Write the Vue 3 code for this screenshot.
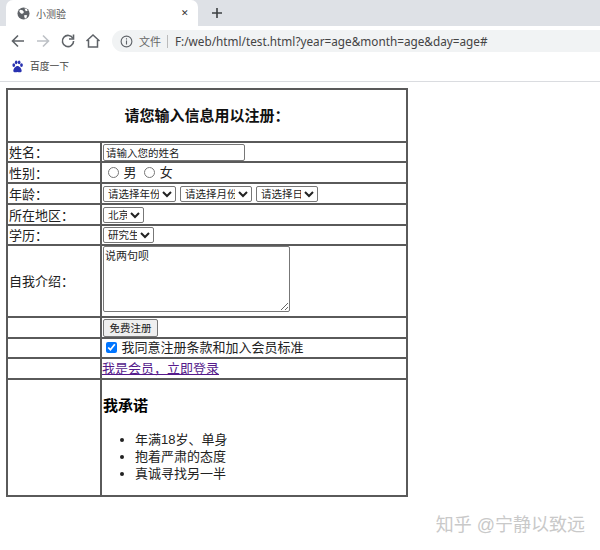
<script setup>
import { ref } from 'vue'

const agreed = ref(true)
const promises = ['年满18岁、单身', '抱着严肃的态度', '真诚寻找另一半']
</script>

<template>
  <div class="page">
    <div class="tabstrip">
      <div class="tab">
        <svg class="globe" width="13" height="13" viewBox="0 0 14 14">
          <circle cx="7" cy="7" r="6.5" fill="#5f6368" />
          <path d="M3 3l3 .5 1.5 2-1 1.5-2 .3-2-2.3zM8 8.5l3 .5-1 3-1.500.5-.8-2.500zM8 1.500l2.500.5 1 2-2 .5z" fill="#fff" />
        </svg>
        <span class="tab-title">小测验</span>
        <span class="tab-close">✕</span>
      </div>
      <svg class="new-tab" width="12" height="12" viewBox="0 0 12 12">
        <path d="M6 1v10M1 6h10" stroke="#3c4043" stroke-width="1.600" />
      </svg>
    </div>

    <div class="toolbar">
      <svg class="nav" width="16" height="16" viewBox="0 0 16 16" fill="none" stroke="#5f6368" stroke-width="1.600">
        <path d="M14 8H2.500M8 2.500L2.500 8 8 13.500" />
      </svg>
      <svg class="nav" width="16" height="16" viewBox="0 0 16 16" fill="none" stroke="#bdc1c6" stroke-width="1.600">
        <path d="M2 8h11.500M8 2.500L13.500 8 8 13.500" />
      </svg>
      <svg class="nav" width="16" height="16" viewBox="0 0 16 16" fill="none" stroke="#5f6368" stroke-width="1.600">
        <path d="M13 5.500A5.600 5.600 0 1 0 13.600 8" />
        <path d="M13.500 1.500v4.500H9" />
      </svg>
      <svg class="nav" width="16" height="16" viewBox="0 0 16 16" fill="none" stroke="#5f6368" stroke-width="1.500">
        <path d="M1.500 8L8 2l6.500 6M3.500 7v7h9V7" />
      </svg>
      <div class="omnibox">
        <svg width="13" height="13" viewBox="0 0 14 14" fill="none" stroke="#5f6368" stroke-width="1.200">
          <circle cx="7" cy="7" r="5.800" />
          <path d="M7 6v4.200M7 3.600v1.200" />
        </svg>
        <span class="scheme">文件</span>
        <span class="sep"></span>
        <span class="url">F:/web/html/test.html?year=age&amp;month=age&amp;day=age#</span>
      </div>
    </div>

    <div class="bookmarks">
      <svg width="13" height="13" viewBox="0 0 14 14" fill="#2932b1">
        <ellipse cx="3" cy="5.500" rx="1.500" ry="2" />
        <ellipse cx="5.600" cy="2.500" rx="1.400" ry="2" />
        <ellipse cx="8.800" cy="2.500" rx="1.400" ry="2" />
        <ellipse cx="11.300" cy="5.500" rx="1.500" ry="2" />
        <path d="M7 6.500c2 0 4.500 3 4.500 5 0 1.800-2 1.800-4.500 1.300-2.500.5-4.500.5-4.500-1.300 0-2 2.500-5 4.500-5z" />
      </svg>
      <span class="bookmark-name">百度一下</span>
    </div>

    <table class="form-table">
      <colgroup>
        <col class="col-label" />
        <col />
      </colgroup>
      <tbody>
        <tr class="row-title">
          <th colspan="2">请您输入信息用以注册：</th>
        </tr>
        <tr class="row-20">
          <td class="label">姓名：</td>
          <td><input class="name-input" type="text" value="请输入您的姓名" /></td>
        </tr>
        <tr class="row-21">
          <td class="label">性别：</td>
          <td class="radios">
            <input type="radio" name="sex" /> 男
            <input type="radio" name="sex" /> 女
          </td>
        </tr>
        <tr class="row-21">
          <td class="label">年龄：</td>
          <td>
            <div class="selects">
              <select class="sel-year"><option>请选择年份</option></select>
              <select class="sel-month"><option>请选择月份</option></select>
              <select class="sel-day"><option>请选择日</option></select>
            </div>
          </td>
        </tr>
        <tr class="row-21">
          <td class="label">所在地区：</td>
          <td><select class="sel-city"><option>北京</option></select></td>
        </tr>
        <tr class="row-20">
          <td class="label">学历：</td>
          <td><select class="sel-edu"><option>研究生</option></select></td>
        </tr>
        <tr class="row-intro">
          <td class="label">自我介绍：</td>
          <td class="intro-cell"><textarea class="intro">说两句呗</textarea></td>
        </tr>
        <tr class="row-21">
          <td></td>
          <td><button class="submit" type="button">免费注册</button></td>
        </tr>
        <tr class="row-20">
          <td></td>
          <td class="agree">
            <input v-model="agreed" type="checkbox" /> 我同意注册条款和加入会员标准
          </td>
        </tr>
        <tr class="row-21">
          <td></td>
          <td class="login-cell"><a class="login" href="#">我是会员，立即登录</a></td>
        </tr>
        <tr class="row-promise">
          <td></td>
          <td>
            <h3>我承诺</h3>
            <ul>
              <li v-for="item in promises" :key="item">{{ item }}</li>
            </ul>
          </td>
        </tr>
      </tbody>
    </table>

    <div class="watermark">知乎 @宁静以致远</div>
  </div>
</template>

<style>
html, body {
  margin: 0;
  background: #fff;
}
</style>

<style scoped>
.page {
  position: relative;
  width: 600px;
  height: 550px;
  overflow: hidden;
  background: #fff;
  font-family: "Liberation Sans", "Noto Sans CJK SC", sans-serif;
  color: #222;
}

.tabstrip {
  display: flex;
  align-items: flex-end;
  height: 26px;
  background: #dee1e6;
}

.tab {
  display: flex;
  align-items: center;
  box-sizing: border-box;
  width: 192px;
  height: 26px;
  margin-left: 6px;
  padding: 0 9px 0 11px;
  background: #fff;
  border-radius: 7px 7px 0 0;
}

.tab-title {
  flex: 1;
  margin-left: 6px;
  font-size: 10px;
  color: #555;
}

.tab-close {
  font-size: 9px;
  color: #333;
}

.new-tab {
  margin: 0 0 7px 13px;
}

.toolbar {
  display: flex;
  align-items: center;
  gap: 9px;
  height: 26px;
  padding: 4px 0 0 10px;
  box-sizing: border-box;
  background: #fff;
}

.nav {
  flex: none;
}

.omnibox {
  display: flex;
  flex: 1;
  align-items: center;
  height: 22px;
  margin-left: 2px;
  padding-left: 8px;
  background: #f1f3f4;
  border-radius: 11px 0 0 11px;
  font-size: 12px;
}

.scheme {
  margin-left: 6px;
  font-size: 11px;
  color: #666;
}

.sep {
  width: 1px;
  height: 13px;
  margin: 0 7px 0 6px;
  background: #bbb;
}

.url {
  font-family: "Noto Sans", sans-serif;
  font-size: 11.750px;
  color: #444;
  white-space: nowrap;
}

.bookmarks {
  display: flex;
  align-items: center;
  box-sizing: border-box;
  height: 30px;
  padding: 0 0 1px 11px;
  border-bottom: 1px solid #dadce0;
}

.bookmark-name {
  margin-left: 6px;
  font-size: 9.750px;
  color: #444;
}

.form-table {
  width: 402px;
  margin: 6px 0 0 6px;
  border-collapse: collapse;
  table-layout: fixed;
  font-size: 13px;
  color: #222;
}

.col-label {
  width: 94px;
}

.form-table th,
.form-table td {
  padding: 0 1px;
  border: 2px solid #5a5a5a;
  line-height: 16px;
}

.form-table td.label {
  padding: 2px 0 0 1px;
}

.form-table td.intro-cell {
  padding-top: 0;
  vertical-align: top;
}

.form-table td.login-cell {
  padding: 0;
}

.row-title {
  height: 53px;
}

.row-title th {
  font-size: 15px;
  font-weight: 700;
  color: #111;
}

.row-21 {
  height: 21px;
}

.row-20 {
  height: 20px;
}

.row-intro {
  height: 72px;
}

.row-promise {
  height: 117px;
}

input,
select,
textarea,
button {
  font-family: "Liberation Sans", "Noto Sans CJK SC", sans-serif;
  font-size: 10.500px;
  color: #222;
}

.name-input {
  display: block;
  box-sizing: border-box;
  width: 142px;
  height: 17px;
  padding: 1px 2px;
  border: 1px solid #777;
  border-radius: 2px;
}

.form-table td.radios {
  padding-left: 2px;
}

.radios input {
  width: 11px;
  height: 11px;
  margin: 0 1px 0 4px;
  vertical-align: -1px;
}

.selects {
  display: flex;
  gap: 4px;
}

select {
  display: block;
  box-sizing: border-box;
  height: 16px;
  padding: 0;
  border: 1px solid #777;
  border-radius: 2px;
  background: #fff;
}

.sel-year {
  width: 73px;
}

.sel-month {
  width: 72px;
}

.sel-day {
  width: 62px;
}

.sel-city {
  width: 41px;
}

.sel-edu {
  width: 51px;
}

.intro {
  display: block;
  box-sizing: border-box;
  width: 187px;
  height: 66px;
  padding: 0 1px;
  border: 1px solid #777;
  border-radius: 2px;
  font-size: 11px;
  resize: both;
}

.submit {
  display: block;
  box-sizing: border-box;
  width: 55px;
  height: 18px;
  padding: 0;
  border: 1px solid #777;
  border-radius: 2px;
  background: #efefef;
}

.agree input {
  width: 11px;
  height: 11px;
  margin: 0 1px 0 3px;
  vertical-align: -1px;
  accent-color: #0075ff;
}

.login {
  color: #551a8b;
}

h3 {
  margin: 16px 0 16px;
  font-size: 15px;
  line-height: 18px;
  color: #000;
}

ul {
  margin: 0 0 13px;
  padding-left: 32px;
  line-height: 17px;
}

.watermark {
  position: absolute;
  right: 15px;
  bottom: 14px;
  font-size: 18px;
  color: #c9c9c9;
}
</style>
